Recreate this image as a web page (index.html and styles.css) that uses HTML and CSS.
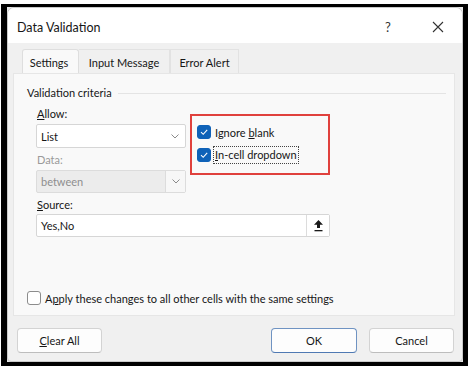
FILE: index.html
```html
<!DOCTYPE html>
<html>
<head>
<meta charset="utf-8">
<link rel="stylesheet" href="styles.css">
</head>
<body>
<div class="frame">
  <div class="dialog">
    <div class="titlebar">
      <span class="title">Data Validation</span>
      <span class="help">?</span>
      <span class="close"><svg width="12" height="12" viewBox="0 0 12 12"><path d="M1 1 L11 11 M11 1 L1 11" stroke="#333" stroke-width="1.1" fill="none"/></svg></span>
    </div>
    <div class="body">
      <div class="tabs">
        <div class="tab active">Settings</div>
        <div class="tab t2">Input Message</div>
        <div class="tab t3">Error Alert</div>
      </div>
      <div class="panel">
        <div class="group-title"><span>Validation criteria</span><span class="rule"></span></div>
        <div class="criteria">
          <div class="row">
            <div class="col">
              <div class="label"><u>A</u>llow:</div>
              <div class="combo"><span class="val">List</span><span class="chev"><svg width="8" height="5" viewBox="0 0 8 5"><path d="M0.5 0.5 L4 4 L7.5 0.5" stroke="#8a8a8a" stroke-width="1" fill="none"/></svg></span></div>
              <div class="label disabled">Data:</div>
              <div class="combo off"><span class="val">between</span><span class="chev btn"><svg width="8" height="5" viewBox="0 0 8 5"><path d="M0.5 0.5 L4 4 L7.5 0.5" stroke="#8a8a8a" stroke-width="1" fill="none"/></svg></span></div>
            </div>
            <div class="redbox">
              <div class="check"><span class="box checked"><svg width="10" height="10" viewBox="0 0 10 10"><path d="M2 5.2 L4.2 7.3 L8.2 2.8" stroke="#fff" stroke-width="1.1" fill="none"/></svg></span><span>Ignore <u>b</u>lank</span></div>
              <div class="check"><span class="box checked"><svg width="10" height="10" viewBox="0 0 10 10"><path d="M2 5.2 L4.2 7.3 L8.2 2.8" stroke="#fff" stroke-width="1.1" fill="none"/></svg></span><span class="focus"><u>I</u>n-cell dropdown</span></div>
            </div>
          </div>
          <div class="label src"><u>S</u>ource:</div>
          <div class="input"><span class="val">Yes,No</span><span class="refbtn"><svg width="9" height="12" viewBox="0 0 9 12"><path d="M4.5 0 L9 4.8 L6 4.8 L6 8 L3 8 L3 4.8 L0 4.8 Z" fill="#1a1a1a"/><rect x="0.5" y="10" width="8" height="1.3" fill="#1a1a1a"/></svg></span></div>
        </div>
        <div class="apply"><span class="box"></span><span>A<u>p</u>ply these changes to all other cells with the same settings</span></div>
      </div>
      <div class="buttons">
        <div class="btn-w"><u>C</u>lear All</div>
        <div class="spacer"></div>
        <div class="btn-w default">OK</div>
        <div class="btn-w">Cancel</div>
      </div>
    </div>
  </div>
</div>
</body>
</html>
```

FILE: styles.css
```css
html, body {
  margin: 0;
  padding: 0;
  background: #ffffff;
}
body {
  padding: 4px 0 0 1px;
  font-family: "Lato", "Segoe UI", "Liberation Sans", sans-serif;
  font-size: 11px;
  color: #161616;
}
.frame {
  width: 456px;
  height: 355px;
  border-style: solid;
  border-color: #000;
  border-width: 3px 5px 4px 6px;
  background: #e9e9e9;
}
.dialog {
  box-sizing: border-box;
  width: 456px;
  height: 355px;
  border: 1px solid #c9c9c9;
  border-radius: 7px 7px 4px 4px;
  overflow: hidden;
  display: flex;
  flex-direction: column;
  background: #f0f0f0;
}
.titlebar {
  box-sizing: border-box;
  height: 35px;
  flex: none;
  background: #ffffff;
  display: flex;
  align-items: center;
  padding: 3px 0 0 9px;
}
.title {
  font-size: 12.5px;
  flex: 1;
}
.help {
  font-size: 13px;
  color: #333;
  width: 12px;
  text-align: center;
  margin-right: 38px;
}
.close {
  display: flex;
  margin-right: 18px;
}
.body {
  flex: 1;
  display: flex;
  flex-direction: column;
  padding: 6px 7px 0 5px;
}
.tabs {
  display: flex;
  height: 24px;
  margin-left: 9px;
}
.tab {
  box-sizing: border-box;
  height: 24px;
  display: flex;
  align-items: center;
  justify-content: center;
  padding-top: 2px;
  border: 1px solid #e2e2e2;
  border-bottom: none;
  color: #161616;
}
.tab.active {
  width: 57px;
  background: #f9f9f9;
  border-color: #dedede;
  border-radius: 3px 3px 0 0;
  padding-right: 3px;
}
.t2 { width: 91px; border-left: none; }
.t3 { width: 69px; border-left: 1px solid #e2e2e2; }
.panel {
  box-sizing: border-box;
  height: 243px;
  background: #f9f9f9;
  border: 1px solid #e6e6e6;
  display: flex;
  flex-direction: column;
  padding: 12px 8px 10px 13px;
}
.group-title {
  display: flex;
  align-items: center;
  height: 14px;
  line-height: 14px;
}
.rule {
  flex: 1;
  height: 1px;
  background: #e4e4e4;
  margin-left: 6px;
}
.criteria {
  margin-left: 9px;
  margin-top: 7px;
}
.row {
  display: flex;
  align-items: flex-start;
}
.col {
  width: 150px;
}
.label {
  height: 14px;
  line-height: 14px;
  padding-left: 1px;
}
.label.disabled {
  color: #9a9a9a;
  margin-top: 5px;
}
.label.src {
  margin-top: 5px;
}
.combo {
  box-sizing: border-box;
  height: 24px;
  margin-top: 3px;
  background: #ffffff;
  border: 1px solid #d6d6d6;
  border-radius: 2px;
  display: flex;
  align-items: center;
}
.combo.off {
  height: 23px;
  background: #ececec;
  border-color: #dcdcdc;
}
.val {
  flex: 1;
  padding-left: 4px;
}
.off .val {
  color: #8e8e8e;
}
.chev {
  width: 20px;
  height: 100%;
  display: flex;
  align-items: center;
  justify-content: center;
}
.chev.btn {
  box-sizing: border-box;
  background: #f7f7f7;
  border-left: 1px solid #dcdcdc;
}
.redbox {
  box-sizing: border-box;
  width: 140px;
  height: 61px;
  margin-left: 4px;
  margin-top: 7px;
  border: 2px solid #e0413d;
  padding: 9px 0 0 5px;
  display: flex;
  flex-direction: column;
  gap: 9px;
}
.check {
  display: flex;
  align-items: center;
  height: 14px;
  gap: 4px;
}
.box {
  box-sizing: border-box;
  width: 14px;
  height: 14px;
  flex: none;
  border-radius: 3px;
  border: 1px solid #8c8c8c;
  background: #ffffff;
  display: flex;
  align-items: center;
  justify-content: center;
}
.box.checked {
  background: #0f62b8;
  border-color: #0f62b8;
}
.focus {
  outline: 1px dotted #444;
  outline-offset: 1px;
  line-height: 14px;
}
.input {
  box-sizing: border-box;
  width: 294px;
  height: 23px;
  margin-top: 2px;
  background: #ffffff;
  border: 1px solid #d6d6d6;
  border-radius: 2px;
  display: flex;
  align-items: center;
}
.refbtn {
  box-sizing: border-box;
  width: 23px;
  height: 21px;
  border-left: 1px solid #dcdcdc;
  background: #ffffff;
  display: flex;
  align-items: center;
  justify-content: center;
}
.apply {
  margin-top: auto;
  display: flex;
  align-items: center;
  gap: 4px;
  height: 14px;
}
.buttons {
  display: flex;
  margin-top: 12px;
  padding: 0 1px 0 4px;
  gap: 12px;
}
.spacer { flex: 1; }
.btn-w {
  box-sizing: border-box;
  width: 85px;
  height: 25px;
  background: #fdfdfd;
  border: 1px solid #d3d3d3;
  border-bottom-color: #bdbdbd;
  border-radius: 4px;
  display: flex;
  align-items: center;
  justify-content: center;
}
.btn-w.default {
  width: 86px;
  border-color: #6f93c2;
  border-bottom-color: #4f79b3;
}
```
